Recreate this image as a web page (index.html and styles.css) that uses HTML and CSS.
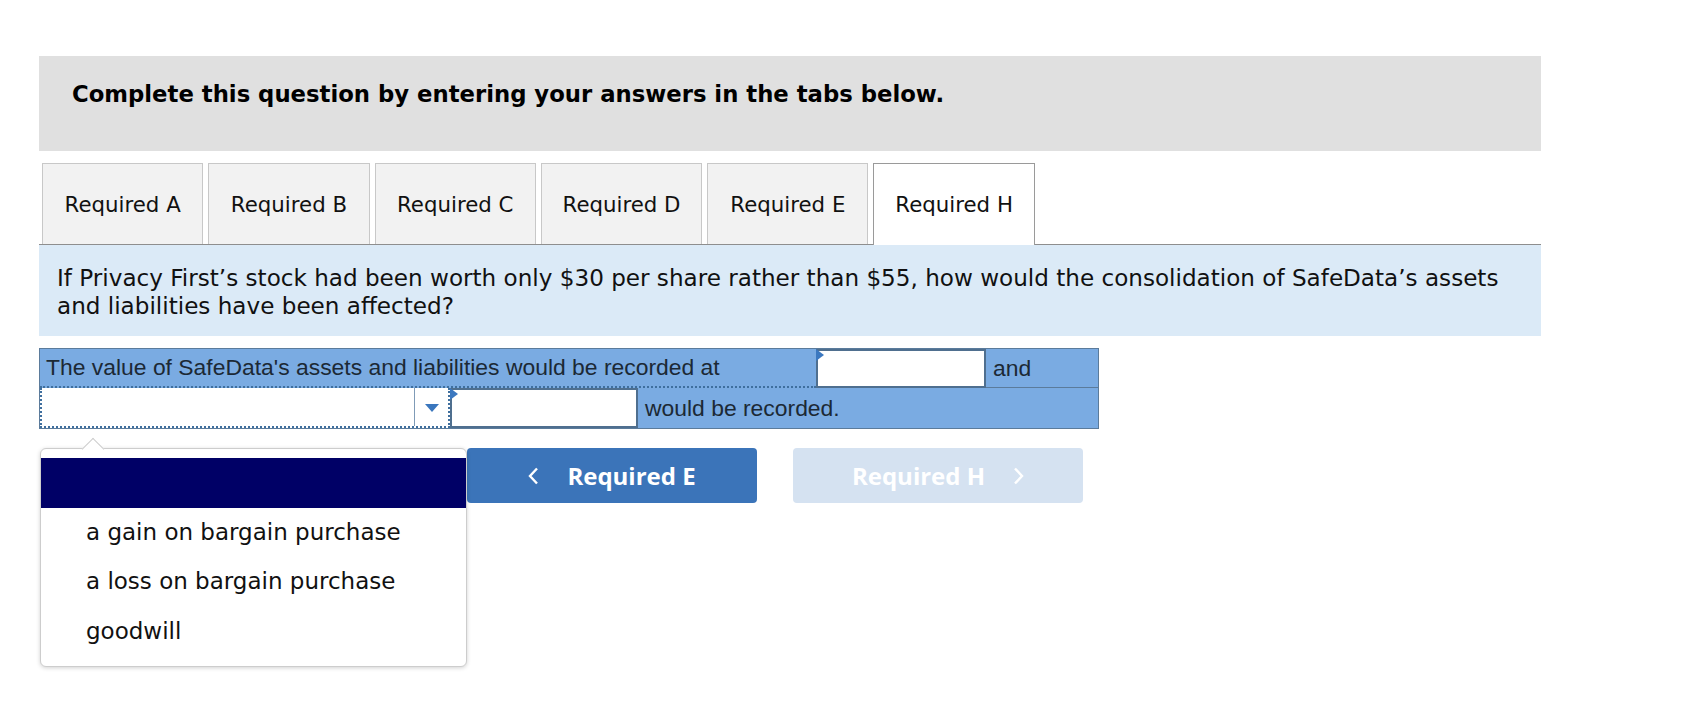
FILE: index.html
```html
<!DOCTYPE html>
<html>
<head>
<meta charset="utf-8">
<link rel="stylesheet" href="styles.css">
</head>
<body>
<div class="page">
  <div class="instructions">Complete this question by entering your answers in the tabs below.</div>
  <div class="tabs">
    <div class="tab">Required A</div>
    <div class="tab">Required B</div>
    <div class="tab">Required C</div>
    <div class="tab">Required D</div>
    <div class="tab">Required E</div>
    <div class="tab active">Required H</div>
  </div>
  <div class="question">If Privacy First’s stock had been worth only $30 per share rather than $55, how would the consolidation of SafeData’s assets and liabilities have been affected?</div>
  <div class="answer">
    <div class="row row1">
      <div class="cell lead">The value of SafeData's assets and liabilities would be recorded at</div>
      <div class="inp inp1"><span class="marker"></span></div>
      <div class="cell tail">and</div>
    </div>
    <div class="row row2">
      <div class="select-cell">
        <div class="select-value"></div>
        <div class="select-arrow"><span class="tri"></span></div>
        <div class="popup">
          <div class="caret"></div>
          <div class="opt selected"></div>
          <div class="opt">a gain on bargain purchase</div>
          <div class="opt">a loss on bargain purchase</div>
          <div class="opt">goodwill</div>
        </div>
      </div>
      <div class="inp inp2"><span class="marker"></span></div>
      <div class="cell tail2">would be recorded.</div>
    </div>
  </div>
  <div class="nav">
    <button class="btn prev"><svg class="chev" width="11" height="18" viewBox="0 0 11 18"><polyline points="9,1.5 2,9 9,16.5" fill="none" stroke="#fff" stroke-width="2.4"/></svg><span>Required E</span></button>
    <button class="btn next"><span>Required H</span><svg class="chev" width="11" height="18" viewBox="0 0 11 18"><polyline points="2,1.5 9,9 2,16.5" fill="none" stroke="#fff" stroke-width="2.4"/></svg></button>
  </div>
</div>
</body>
</html>
```
FILE: styles.css
```css
html, body {
  margin: 0;
  background: #fff;
}
.page {
  padding: 56px 0 0 39px;
  width: 1502px;
  min-height: 640px;
}
.instructions {
  height: 95px;
  box-sizing: border-box;
  background: #e0e0e0;
  padding: 25px 0 0 33px;
  font-family: "DejaVu Sans", Verdana, sans-serif;
  font-weight: bold;
  font-size: 22.75px;
  line-height: 27px;
  color: #000;
}
.tabs {
  display: flex;
  gap: 5px;
  margin-top: 12px;
  padding-left: 3px;
  border-bottom: 1px solid #8e8e8e;
}
.tab {
  width: 161.3px;
  height: 81px;
  box-sizing: border-box;
  border: 1px solid #c8c8c8;
  border-bottom: none;
  background: #f2f2f2;
  display: flex;
  align-items: center;
  justify-content: center;
  font-family: "DejaVu Sans", Verdana, sans-serif;
  font-size: 21.3px;
  color: #111;
}
.tab.active {
  background: #fff;
  border-color: #9a9a9a;
  height: 82px;
  margin-bottom: -1px;
}
.question {
  background: #dbeaf7;
  padding: 19px 18px 16px 18px;
  font-family: "DejaVu Sans", Verdana, sans-serif;
  font-size: 23.1px;
  line-height: 28px;
  color: #111;
}
.answer {
  margin-top: 12px;
  width: 1060px;
  box-sizing: border-box;
  border: 1px solid #5b7b9b;
  background: #7aabe2;
  font-family: "Liberation Sans", Arial, sans-serif;
  font-size: 22.9px;
  color: #1c2935;
}
.row {
  display: flex;
}
.row1 {
  height: 39px;
}
.row2 {
  height: 40px;
}
.cell {
  display: flex;
  align-items: center;
  box-sizing: border-box;
}
.lead {
  width: 776px;
  padding-left: 6px;
  border-bottom: 2px dotted #3f6f9e;
}
.tail {
  flex: 1;
  padding-left: 7px;
  border-bottom: 1px solid #5b7b9b;
}
.tail2 {
  flex: 1;
  padding-left: 7px;
}
.inp {
  position: relative;
  box-sizing: border-box;
  border: 2px solid #4f6f8f;
  background: #fff;
}
.inp1 {
  width: 170px;
}
.inp2 {
  width: 188px;
}
.marker {
  position: absolute;
  left: -2px;
  top: -2px;
  width: 0;
  height: 0;
  border-top: 6px solid transparent;
  border-bottom: 6px solid transparent;
  border-left: 8px solid #3b78c0;
}
.select-cell {
  position: relative;
  width: 410px;
  box-sizing: border-box;
  display: flex;
  background: #fff;
  border-left: 2px dotted #3f6f9e;
  border-right: 2px dotted #3f6f9e;
  border-bottom: 2px dotted #3f6f9e;
}
.select-value {
  width: 372px;
}
.select-arrow {
  flex: 1;
  border-left: 1px solid #7f9bb7;
  display: flex;
  align-items: center;
  justify-content: center;
}
.tri {
  width: 0;
  height: 0;
  border-left: 7px solid transparent;
  border-right: 7px solid transparent;
  border-top: 8px solid #3a76bd;
  margin-top: 2px;
}
.popup {
  position: absolute;
  left: -2px;
  top: 60px;
  width: 427px;
  box-sizing: border-box;
  background: #fff;
  border: 1px solid #cdcdcd;
  border-radius: 6px;
  box-shadow: 0 1px 4px rgba(0, 0, 0, 0.18);
  padding: 9px 0 10px;
  z-index: 5;
  font-family: "DejaVu Sans", Verdana, sans-serif;
  font-size: 23px;
  color: #111;
}
.caret {
  position: absolute;
  left: 44px;
  top: -8px;
  width: 15px;
  height: 15px;
  background: #fff;
  border-top: 1px solid #cdcdcd;
  border-left: 1px solid #cdcdcd;
  transform: rotate(45deg);
}
.opt {
  position: relative;
  height: 49.5px;
  line-height: 49.5px;
  padding-left: 45px;
}
.opt.selected {
  background: #000066;
}
.nav {
  display: flex;
  gap: 36px;
  margin-top: 19px;
  padding-left: 428px;
}
.btn {
  width: 290px;
  height: 55px;
  border: 0;
  border-radius: 4px;
  display: flex;
  align-items: center;
  justify-content: center;
  gap: 28px;
  font-family: "Open Sans", sans-serif;
  font-weight: bold;
  font-size: 24px;
  color: #fff;
  padding: 0;
}
.prev {
  background: #3b74b9;
}
.next {
  background: #d5e2f1;
}
.chev {
  display: block;
}
```
